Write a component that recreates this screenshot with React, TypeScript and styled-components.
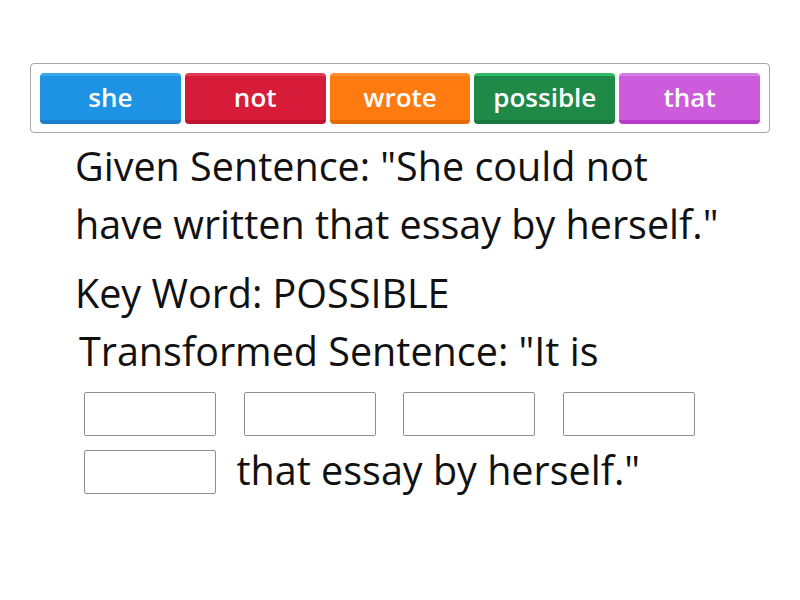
import styled, { createGlobalStyle } from "styled-components";

const GlobalStyle = createGlobalStyle`
  html, body {
    margin: 0;
    padding: 0;
    background: #ffffff;
    font-family: "Open Sans", "Liberation Sans", sans-serif;
  }
`;

const Page = styled.div`
  width: 800px;
  height: 600px;
  padding: 63px 30px 0 30px;
  box-sizing: border-box;
`;

const TileTray = styled.div`
  display: flex;
  gap: 4px;
  padding: 9px 9px 8px 9px;
  border: 1px solid #a8a8a8;
  border-radius: 4px;
  height: 70px;
  box-sizing: border-box;
`;

const Tile = styled.div<{ $bg: string; $top: string; $bottom: string }>`
  flex: 1;
  height: 51px;
  box-sizing: border-box;
  display: flex;
  align-items: center;
  justify-content: center;
  background: ${({ $bg }) => $bg};
  border-top: 3px solid ${({ $top }) => $top};
  border-bottom: 4px solid ${({ $bottom }) => $bottom};
  border-radius: 4px;
  color: #ffffff;
  font-weight: 600;
  font-size: 26px;
  padding-bottom: 3px;
`;

const Content = styled.div`
  padding: 4px 0 0 45px;
  color: #111111;
  font-size: 39.5px;
`;

const Line = styled.div<{ $indent?: number; $gap?: number }>`
  line-height: 58px;
  padding-left: ${({ $indent }) => $indent ?? 0}px;
  margin-top: ${({ $gap }) => $gap ?? 0}px;
  white-space: nowrap;
`;

const BlankRow = styled.div<{ $gap?: number }>`
  display: flex;
  align-items: center;
  gap: 27.5px;
  padding-left: 9px;
  height: 58px;
  margin-top: ${({ $gap }) => $gap ?? 0}px;
`;

const Blank = styled.div`
  width: 132px;
  height: 44px;
  box-sizing: border-box;
  border: 1px solid #8f8f8f;
  border-radius: 2px;
  background: #ffffff;
`;

const Tail = styled.span`
  margin-left: -7px;
  line-height: 58px;
  margin-top: -4px;
  white-space: nowrap;
`;

const tiles = [
  { word: "she", bg: "#1f93e3", top: "#35a6ee", bottom: "#1b7fcb" },
  { word: "not", bg: "#d61c38", top: "#e23a55", bottom: "#bd1530" },
  { word: "wrote", bg: "#ff7b0f", top: "#ff8f2e", bottom: "#e56a06" },
  { word: "possible", bg: "#1f8a48", top: "#2fba63", bottom: "#1a773e" },
  { word: "that", bg: "#cc5cdc", top: "#d67de4", bottom: "#b73ccb" },
];

export default function App() {
  return (
    <>
      <GlobalStyle />
      <Page>
        <TileTray>
          {tiles.map((t) => (
            <Tile key={t.word} $bg={t.bg} $top={t.top} $bottom={t.bottom}>
              {t.word}
            </Tile>
          ))}
        </TileTray>
        <Content>
          <Line>Given Sentence: "She could not</Line>
          <Line>have written that essay by herself."</Line>
          <Line $gap={11}>Key Word: POSSIBLE</Line>
          <Line $indent={4}>Transformed Sentence: "It is</Line>
          <BlankRow $gap={5}>
            <Blank />
            <Blank />
            <Blank />
            <Blank />
          </BlankRow>
          <BlankRow>
            <Blank />
            <Tail>that essay by herself."</Tail>
          </BlankRow>
        </Content>
      </Page>
    </>
  );
}
